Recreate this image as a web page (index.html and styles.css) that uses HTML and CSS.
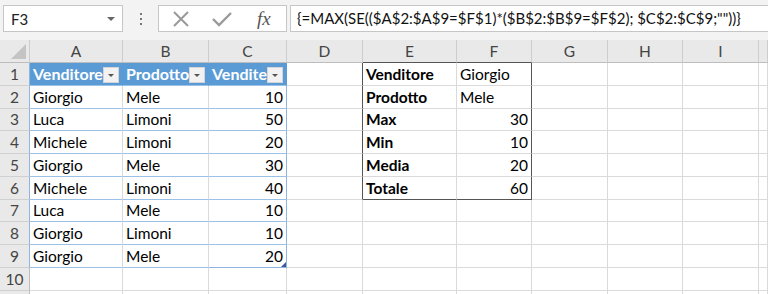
FILE: index.html
```html
<!DOCTYPE html>
<html lang="it">
<head>
  <meta charset="UTF-8">
  <title>Foglio - MAX con SE</title>
  <link rel="stylesheet" href="styles.css">
</head>
<body>
  <div class="toolbar">
    <div class="namebox">
      <span>F3</span>
      <span class="caret"></span>
    </div>
    <div class="dots">
      <span></span><span></span><span></span>
    </div>
    <div class="fbuttons">
      <svg class="ico" width="18" height="16" viewBox="0 0 18 16">
        <path d="M2 1 L16 15 M16 1 L2 15" stroke="#9a9a9a" stroke-width="2" fill="none"/>
      </svg>
      <svg class="ico" width="20" height="16" viewBox="0 0 20 16">
        <path d="M1 8 L7 14 L19 2" stroke="#9a9a9a" stroke-width="2.4" fill="none"/>
      </svg>
      <span class="fx">fx</span>
    </div>
    <div class="formula">{=MAX(SE(($A$2:$A$9=$F$1)*($B$2:$B$9=$F$2); $C$2:$C$9;""))}</div>
  </div>

  <div class="sheet">
    <div class="row head">
      <div class="corner"><span class="tri"></span></div>
      <div>A</div><div>B</div><div>C</div><div>D</div><div class="eb">E</div><div class="eb">F</div><div>G</div><div>H</div><div>I</div><div></div>
    </div>

    <div class="row">
      <div class="num tl">1</div>
      <div class="th">Venditore<span class="flt"></span></div>
      <div class="th">Prodotto<span class="flt"></span></div>
      <div class="th">Vendite<span class="flt"></span></div>
      <div class="br"></div>
      <div class="lbl">Venditore</div>
      <div class="br">Giorgio</div>
      <div></div><div></div><div></div><div></div>
    </div>

    <div class="row">
      <div class="num tl">2</div>
      <div class="td">Giorgio</div><div class="td">Mele</div><div class="td n tr">10</div>
      <div class="br"></div>
      <div class="lbl">Prodotto</div>
      <div class="br">Mele</div>
      <div></div><div></div><div></div><div></div>
    </div>

    <div class="row">
      <div class="num tl">3</div>
      <div class="td">Luca</div><div class="td">Limoni</div><div class="td n tr">50</div>
      <div class="br"></div>
      <div class="lbl">Max</div>
      <div class="n br">30</div>
      <div></div><div></div><div></div><div></div>
    </div>

    <div class="row">
      <div class="num tl">4</div>
      <div class="td">Michele</div><div class="td">Limoni</div><div class="td n tr">20</div>
      <div class="br"></div>
      <div class="lbl">Min</div>
      <div class="n br">10</div>
      <div></div><div></div><div></div><div></div>
    </div>

    <div class="row">
      <div class="num tl">5</div>
      <div class="td">Giorgio</div><div class="td">Mele</div><div class="td n tr">30</div>
      <div class="br"></div>
      <div class="lbl">Media</div>
      <div class="n br">20</div>
      <div></div><div></div><div></div><div></div>
    </div>

    <div class="row">
      <div class="num tl">6</div>
      <div class="td">Michele</div><div class="td">Limoni</div><div class="td n tr">40</div>
      <div class="br"></div>
      <div class="lbl bb">Totale</div>
      <div class="n br bb">60</div>
      <div></div><div></div><div></div><div></div>
    </div>

    <div class="row">
      <div class="num tl">7</div>
      <div class="td">Luca</div><div class="td">Mele</div><div class="td n tr">10</div>
      <div></div><div></div><div></div><div></div><div></div><div></div><div></div>
    </div>

    <div class="row">
      <div class="num tl">8</div>
      <div class="td">Giorgio</div><div class="td">Limoni</div><div class="td n tr">10</div>
      <div></div><div></div><div></div><div></div><div></div><div></div><div></div>
    </div>

    <div class="row">
      <div class="num tl">9</div>
      <div class="td">Giorgio</div><div class="td">Mele</div><div class="td n tr last">20<span class="grip"></span></div>
      <div></div><div></div><div></div><div></div><div></div><div></div><div></div>
    </div>

    <div class="row">
      <div class="num">10</div>
      <div></div><div></div><div></div><div></div><div></div><div></div><div></div><div></div><div></div><div></div>
    </div>

    <div class="row">
      <div class="num"></div>
      <div></div><div></div><div></div><div></div><div></div><div></div><div></div><div></div><div></div><div></div>
    </div>
  </div>
</body>
</html>
```

FILE: styles.css
```css
* {
  box-sizing: border-box;
  margin: 0;
  padding: 0;
}

body {
  width: 768px;
  height: 294px;
  overflow: hidden;
  background: #ffffff;
  font-family: 'Lato', 'Open Sans', sans-serif;
  color: #000;
}

/* barra della formula */
.toolbar {
  height: 40px;
  background: #f3f3f3;
  display: flex;
  align-items: flex-start;
  padding-top: 5px;
  padding-left: 3px;
}

.namebox {
  width: 120px;
  height: 27px;
  background: #fff;
  border: 1px solid #c6c6c6;
  display: flex;
  align-items: center;
  justify-content: space-between;
  padding: 0 7px 0 7px;
  font-size: 15px;
  color: #222;
}

.caret {
  width: 0;
  height: 0;
  border-left: 4px solid transparent;
  border-right: 4px solid transparent;
  border-top: 4px solid #666;
}

.dots {
  width: 35px;
  height: 27px;
  display: flex;
  flex-direction: column;
  align-items: center;
  justify-content: center;
  gap: 3px;
}

.dots span {
  width: 2px;
  height: 2px;
  background: #777;
}

.fbuttons {
  width: 129px;
  height: 27px;
  background: #fff;
  border: 1px solid #c6c6c6;
  display: flex;
  align-items: center;
  padding-left: 13px;
  gap: 22px;
}

.fx {
  font-family: 'Liberation Serif', serif;
  font-style: italic;
  font-size: 19px;
  color: #555;
  margin-left: 3px;
}

.formula {
  flex: 1;
  height: 27px;
  margin-left: 3px;
  background: #fff;
  border: 1px solid #c6c6c6;
  border-right: none;
  padding-left: 6px;
  font-size: 15px;
  line-height: 25px;
  color: #111;
  white-space: nowrap;
}

/* griglia */
.row {
  display: grid;
  grid-template-columns: 30px 93px 86px 78px 76px 94px 75px 76px 75px 76px 1fr;
  height: 22.75px;
}

.row > div {
  border-right: 1px solid #dadada;
  border-bottom: 1px solid #dadada;
  font-size: 15.5px;
  padding: 0 3px;
  display: flex;
  align-items: center;
  white-space: nowrap;
  overflow: hidden;
  position: relative;
}

.row.head {
  height: 23px;
  background: #e9e9e9;
}

.row.head > div {
  justify-content: center;
  color: #444;
  border-right-color: #cdcdcd;
  border-bottom-color: #bdbdbd;
}

.corner .tri {
  position: absolute;
  right: 3px;
  bottom: 3px;
  width: 0;
  height: 0;
  border-left: 15px solid transparent;
  border-bottom: 15px solid #c4c4c4;
}

.row .num {
  background: #e9e9e9;
  justify-content: center;
  color: #444;
  border-right-color: #bdbdbd;
  border-bottom-color: #d0d0d0;
  padding: 0;
}

.row .num.tl {
  border-right-color: #8db4e2;
}

.row .th {
  background: #5b9bd5;
  color: #fff;
  font-weight: bold;
  font-size: 16px;
  border-right-color: #5b9bd5;
  border-bottom-color: #9bc2e6;
  padding-left: 3px;
}

.flt {
  position: absolute;
  right: 3px;
  bottom: 2px;
  width: 16px;
  height: 16px;
  background: #f2f2f2;
  border: 1px solid #d4d4d4;
}

.flt::after {
  content: "";
  position: absolute;
  left: 4px;
  top: 6px;
  border-left: 3px solid transparent;
  border-right: 3px solid transparent;
  border-top: 3px solid #555;
}

.row .td {
  border-bottom-color: #9bc2e6;
}

.row .n {
  justify-content: flex-end;
}

.row .tr {
  border-right-color: #8db4e2;
}

.row .last {
  border-bottom-color: #8db4e2;
}

.grip {
  position: absolute;
  right: 0;
  bottom: 0;
  width: 0;
  height: 0;
  border-left: 5px solid transparent;
  border-bottom: 5px solid #3a5a9a;
}

/* riquadro riepilogo */
.row .br {
  border-right-color: #555;
}

.row .lbl {
  font-weight: bold;
}

.row .bb {
  border-bottom-color: #555;
}

.row.head .eb {
  border-bottom-color: #555;
}
```
